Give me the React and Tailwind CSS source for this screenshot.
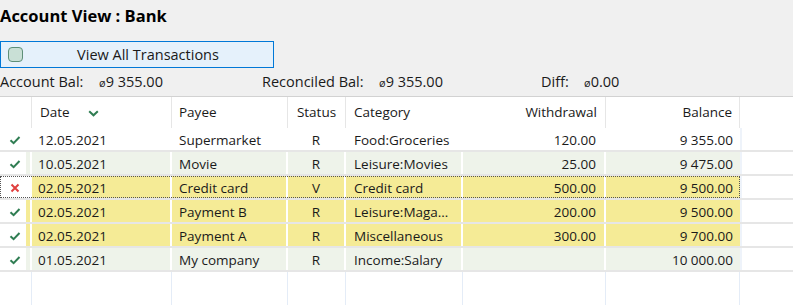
import React from "react";

const rows = [
  { ok: true, date: "12.05.2021", payee: "Supermarket", status: "R", cat: "Food:Groceries", wd: "120.00", bal: "9 355.00", tone: "white" },
  { ok: true, date: "10.05.2021", payee: "Movie", status: "R", cat: "Leisure:Movies", wd: "25.00", bal: "9 475.00", tone: "green" },
  { ok: false, date: "02.05.2021", payee: "Credit card", status: "V", cat: "Credit card", wd: "500.00", bal: "9 500.00", tone: "yellow", focus: true },
  { ok: true, date: "02.05.2021", payee: "Payment B", status: "R", cat: "Leisure:Maga…", wd: "200.00", bal: "9 500.00", tone: "yellow" },
  { ok: true, date: "02.05.2021", payee: "Payment A", status: "R", cat: "Miscellaneous", wd: "300.00", bal: "9 700.00", tone: "yellow" },
  { ok: true, date: "01.05.2021", payee: "My company", status: "R", cat: "Income:Salary", wd: "", bal: "10 000.00", tone: "green" },
];

const toneBg = {
  white: "bg-white",
  green: "bg-[#eef3ea]",
  yellow: "bg-[#f5eb96]",
};

function Check() {
  return (
    <svg width="12" height="10" viewBox="0 0 12 10">
      <path d="M1.5 5.2 L4.6 8.2 L10.5 2" fill="none" stroke="#2f7d52" strokeWidth="2" />
    </svg>
  );
}

function Cross() {
  return (
    <svg width="10" height="10" viewBox="0 0 10 10">
      <path d="M1.5 1.5 L8.5 8.5 M8.5 1.5 L1.5 8.5" fill="none" stroke="#e0403f" strokeWidth="2" />
    </svg>
  );
}

function Chevron() {
  return (
    <svg width="11" height="7" viewBox="0 0 11 7">
      <path d="M1.2 1.2 L5.5 5.3 L9.8 1.2" fill="none" stroke="#2f7d52" strokeWidth="2" />
    </svg>
  );
}

export default function App() {
  return (
    <div
      className="w-[793px] h-[305px] overflow-hidden bg-[#f0f0f0] text-[13.5px] text-[#1a1a1a]"
      style={{ fontFamily: '"Open Sans", "Noto Sans", sans-serif' }}
    >
      {/* Title */}
      <div className="h-[32px] flex items-center text-[16.5px] font-bold text-black">Account View : Bank</div>

      {/* Toggle button */}
      <div className="mt-[9px] w-[274px] h-[27px] flex items-center border border-[#0078d7] bg-[#e5f1fb] text-[14.5px]">
        <div className="ml-[7px] w-[15px] h-[15px] rounded-[4px] border-[1.5px] border-[#5e8f78] bg-[#c9e0d6]" />
        <div className="flex-1 text-center pt-[1px]">View All Transactions</div>
      </div>

      {/* Balances */}
      <div className="h-[28px] flex items-center text-[14.5px]">
        <span className="w-[99px]">Account Bal:</span>
        <span className="w-[163px]"><span className="text-[11px]">ø</span>9 355.00</span>
        <span className="w-[117px]">Reconciled Bal:</span>
        <span className="w-[162px]"><span className="text-[11px]">ø</span>9 355.00</span>
        <span className="w-[43px]">Diff:</span>
        <span><span className="text-[11px]">ø</span>0.00</span>
      </div>
      <div className="h-[1px] bg-[#d2d2d2]" />

      {/* Grid */}
      <div className="bg-white">
        <div className="h-[31px] flex items-center">
          <div className="w-[32px] h-full border-r border-[#e6e6e6]" />
          <div className="w-[140px] h-full flex items-center pl-[8px] border-r border-[#e6e6e6]">
            <span>Date</span>
            <span className="ml-[18px] mt-[2px]"><Chevron /></span>
          </div>
          <div className="w-[116px] h-full flex items-center pl-[7px] border-r border-[#e6e6e6]">Payee</div>
          <div className="w-[58px] h-full flex items-center justify-center border-r border-[#e6e6e6]">Status</div>
          <div className="w-[117px] h-full flex items-center pl-[8px]">Category</div>
          <div className="w-[143px] h-full flex items-center justify-end pr-[8px] border-r border-[#e6e6e6]">Withdrawal</div>
          <div className="w-[134px] h-full flex items-center justify-end pr-[7px] border-r border-[#e6e6e6]">Balance</div>
          <div className="flex-1" />
        </div>

        {rows.map((r, i) => {
          const bg = toneBg[r.tone];
          return (
            <div key={i} className="h-[24px] flex border-b-2 border-[#e6e6e6]">
              <div
                className={
                  "w-[740px] flex " +
                  (r.focus ? "outline-1 outline-dotted outline-[#555] -outline-offset-1" : "")
                }
              >
                <div className="w-[32px] flex border-r-2 border-white">
                  <div className="w-[26px] bg-white flex items-center justify-center pl-[3px] pt-[1px]">
                    {r.ok ? <Check /> : <Cross />}
                  </div>
                  <div className={"flex-1 " + (r.focus ? "bg-white" : bg)} />
                </div>
                <div className={"w-[140px] flex items-center pl-[6px] pt-[2px] border-r-2 border-white " + bg}>{r.date}</div>
                <div className={"w-[116px] flex items-center pl-[7px] pt-[2px] border-r-2 border-white " + bg}>{r.payee}</div>
                <div className={"w-[58px] flex items-center justify-center pt-[2px] border-r-2 border-white " + bg}>{r.status}</div>
                <div className={"w-[117px] flex items-center pl-[8px] pt-[2px] border-r-2 border-white whitespace-nowrap " + bg}>{r.cat}</div>
                <div className={"w-[143px] flex items-center justify-end pr-[8px] pt-[2px] border-r-2 border-white " + bg}>{r.wd}</div>
                <div className={"w-[134px] flex items-center justify-end pr-[7px] pt-[2px] " + bg}>{r.bal}</div>
              </div>
              <div className="flex-1 bg-white border-l-2 border-[#eef3fa]" />
            </div>
          );
        })}

        <div className="h-[40px] flex">
          <div className="w-[32px] border-r border-[#e4ecf7]" />
          <div className="w-[140px] border-r border-[#e4ecf7]" />
          <div className="w-[116px] border-r border-[#e4ecf7]" />
          <div className="w-[58px] border-r border-[#e4ecf7]" />
          <div className="w-[117px] border-r border-[#e4ecf7]" />
          <div className="w-[143px] border-r border-[#e4ecf7]" />
          <div className="w-[134px] border-r border-[#e4ecf7]" />
          <div className="flex-1" />
        </div>
      </div>
    </div>
  );
}
